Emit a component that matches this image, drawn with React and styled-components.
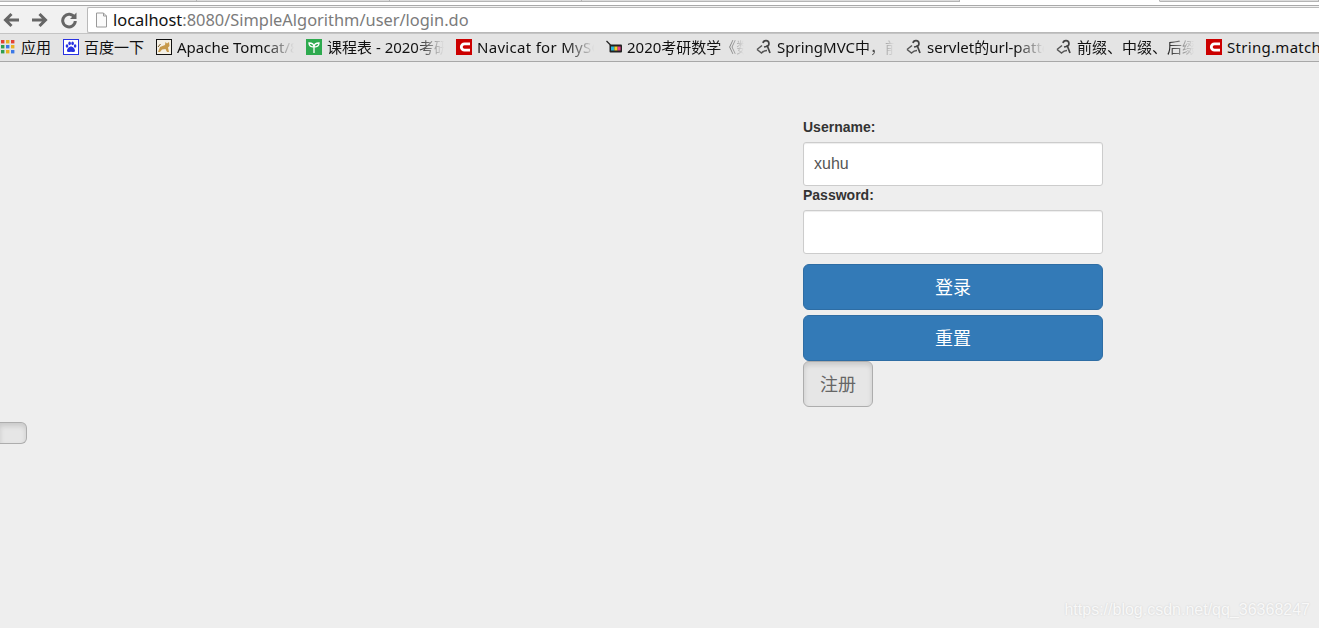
import React from 'react';
import styled, { createGlobalStyle } from 'styled-components';

const SANS = '"Noto Sans", "Noto Sans CJK SC", sans-serif';
const FORM = '"Liberation Sans", "Noto Sans CJK SC", sans-serif';

const GlobalStyle = createGlobalStyle`
  html, body {
    margin: 0;
    padding: 0;
    height: 100%;
    overflow: hidden;
    background: #eeeeee;
  }
  * {
    box-sizing: border-box;
  }
`;

const Window = styled.div`
  width: 1319px;
  height: 628px;
  display: flex;
  flex-direction: column;
  overflow: hidden;
  background: #eeeeee;
`;

const TabStrip = styled.div`
  height: 6px;
  flex: none;
  display: flex;
  background: #ffffff;
  border-bottom: 1px solid #a9a9a9;
`;

const TabEdge = styled.div`
  width: ${(p) => p.$width}px;
  height: 2px;
  flex: none;
  background: ${(p) => (p.$light ? '#ffffff' : '#dcdcdc')};
  border-bottom: 1px solid ${(p) => (p.$light ? '#ffffff' : '#b4b4b4')};
  border-right: 1px solid #b4b4b4;
`;

const Toolbar = styled.div`
  height: 27px;
  flex: none;
  display: flex;
  align-items: center;
  padding-left: 2px;
  background: #f1f1f1;
`;

const NavIcon = styled.svg`
  width: 18px;
  height: 18px;
  flex: none;
  margin-right: 11px;
  fill: none;
  stroke: #666666;
  stroke-width: 3;
`;

const AddressBar = styled.div`
  flex: 1;
  height: 26px;
  margin-left: -2px;
  display: flex;
  align-items: center;
  padding-left: 7px;
  background: #ffffff;
  border: 1px solid #b9b9b9;
  border-right: none;
  border-radius: 2px 0 0 2px;
  font: 16.4px ${SANS};
  color: #7b7b7b;
  white-space: nowrap;
`;

const PageIcon = styled.svg`
  width: 13px;
  height: 16px;
  flex: none;
  margin-right: 5px;
`;

const Host = styled.span`
  color: #111111;
`;

const BookmarkBar = styled.div`
  height: 29px;
  flex: none;
  display: flex;
  align-items: center;
  padding-bottom: 2px;
  background: #e4e4e4;
  border-top: 1px solid #c4c4c4;
  border-bottom: 1px solid #a8a8a8;
  overflow: hidden;
`;

const Bookmark = styled.div`
  width: ${(p) => p.$width}px;
  flex: none;
  display: flex;
  align-items: center;
  gap: ${(p) => p.$gap || 5}px;
  margin-left: ${(p) => p.$left || 0}px;
`;

const BookmarkLabel = styled.span`
  flex: 1;
  min-width: 0;
  overflow: hidden;
  white-space: nowrap;
  font: 15px/20px ${SANS};
  letter-spacing: ${(p) => p.$spacing || 0}px;
  color: #111111;
  ${(p) =>
    p.$fade &&
    `-webkit-mask-image: linear-gradient(to right, #000 76%, transparent 100%);
     mask-image: linear-gradient(to right, #000 76%, transparent 100%);`}
`;

const Favicon = styled.svg`
  width: 16px;
  height: 16px;
  flex: none;
`;

const AppsSvg = styled.svg`
  width: 14px;
  height: 14px;
  flex: none;
`;

const Page = styled.main`
  position: relative;
  flex: 1;
  padding-top: 58px;
  background: #eeeeee;
`;

const LoginForm = styled.form`
  width: 300px;
  margin: 0 0 0 803px;
  display: flex;
  flex-direction: column;
`;

const FieldLabel = styled.label`
  display: block;
  height: 20px;
  font: bold 14px/14px ${FORM};
  color: #333333;
  margin-bottom: 2px;
`;

const TextInput = styled.input`
  display: block;
  width: 300px;
  height: 44px;
  padding: 0 10px;
  background: #ffffff;
  border: 1px solid #cccccc;
  border-radius: 3px;
  box-shadow: inset 0 1px 1px rgba(0, 0, 0, 0.075);
  font: 16px ${FORM};
  color: #555555;
  outline: none;
  margin-bottom: 2px;
`;

const PrimaryButton = styled.button`
  display: block;
  width: 300px;
  height: 46px;
  margin-top: ${(p) => p.$top}px;
  padding: 0 0 2px;
  background: #337ab7;
  border: 1px solid #2e6da4;
  border-radius: 6px;
  font: 18px ${FORM};
  color: #ffffff;
`;

const GrayButton = styled.button`
  display: block;
  width: 70px;
  height: 46px;
  padding: 0 0 2px;
  background: #e6e6e6;
  border: 1px solid #adadad;
  border-radius: 6px;
  box-shadow: inset 0 3px 5px rgba(0, 0, 0, 0.125);
  font: 18px ${FORM};
  color: #666666;
`;

const StrayButton = styled.div`
  width: 27px;
  height: 22px;
  margin-top: 15px;
  background: #e6e6e6;
  border: 1px solid #adadad;
  border-left: none;
  border-radius: 0 6px 6px 0;
  box-shadow: inset 0 3px 5px rgba(0, 0, 0, 0.125);
`;

const Watermark = styled.div`
  position: absolute;
  right: 9px;
  bottom: 9px;
  font: 16px ${FORM};
  color: #f8f8f8;
  text-shadow: 0 0 2px rgba(0, 0, 0, 0.14);
`;

const BaiduIcon = () => (
  <Favicon viewBox="0 0 16 16">
    <rect x="0.5" y="0.5" width="15" height="15" fill="#fff" stroke="#2932e1" />
    <g fill="#2932e1">
      <ellipse cx="4" cy="7" rx="1.3" ry="1.8" />
      <ellipse cx="6.6" cy="4.4" rx="1.3" ry="1.8" />
      <ellipse cx="9.6" cy="4.4" rx="1.3" ry="1.8" />
      <ellipse cx="12.1" cy="7" rx="1.3" ry="1.8" />
      <path d="M8 7.5c-2 0-4 2.4-4 4.2 0 1.6 2 1.4 4 1.1 2 .3 4 .5 4-1.1 0-1.8-2-4.2-4-4.2z" />
    </g>
  </Favicon>
);

const TomcatIcon = () => (
  <Favicon viewBox="0 0 16 16">
    <rect x="0.5" y="0.5" width="15" height="15" fill="#f4f0e6" stroke="#111" />
    <path d="M2 13l2-5 5-2 .5-3 1.5 1.5L13 3l.5 4-1.5 1.5 1 4.5h-2l-1.5-3-3.5.5L4 13z" fill="#c79a4b" />
    <path d="M2 8l2.5-3" stroke="#7a5a26" fill="none" />
  </Favicon>
);

const SproutIcon = () => (
  <Favicon viewBox="0 0 16 16">
    <rect width="16" height="16" fill="#2eaa4f" />
    <path
      d="M8 14V8M8 8C8 5 6 4 3 4c0 3 2 4 5 4zM8 8c0-3 2-4 5-4 0 3-2 4-5 4z"
      fill="none"
      stroke="#fff"
      strokeWidth="1.3"
    />
  </Favicon>
);

const NavicatIcon = () => (
  <Favicon viewBox="0 0 16 16">
    <rect width="16" height="16" fill="#cc0000" />
    <path d="M14 4.8H8.5a3.2 3.2 0 0 0 0 6.4H14" fill="none" stroke="#fff" strokeWidth="2.8" />
  </Favicon>
);

const TvIcon = () => (
  <Favicon viewBox="0 0 16 16">
    <path d="M0.5 2l4 4" stroke="#222" strokeWidth="1.2" />
    <rect x="3.5" y="5.5" width="12.5" height="8" rx="1" fill="#222" />
    <rect x="5" y="7.5" width="3.4" height="4" fill="#28b5d8" />
    <rect x="8.4" y="7.500" width="3.2" height="4" fill="#f5d327" />
    <rect x="11.6" y="7.5" width="3" height="4" fill="#e8418c" />
  </Favicon>
);

const CsdnIcon = () => (
  <Favicon viewBox="0 0 16 16">
    <path
      d="M1 10.5L6 6.5M1 10.5l4.5 3.5c1.500-1.500 3-2.500 5.500-2.500"
      fill="none"
      stroke="#555"
      strokeWidth="1.5"
    />
    <path
      d="M7 4a3 3 0 1 1 3.5 3.5L8 8M11 6l3 8"
      fill="none"
      stroke="#444"
      strokeWidth="1.7"
    />
  </Favicon>
);

const AppsIcon = () => (
  <AppsSvg viewBox="0 0 14 14">
    {['#e34133', '#e8b020', '#e34133', '#2f9e4f', '#3b78e7', '#e8b020', '#2f9e4f', '#e8b020', '#3b78e7'].map(
      (color, i) => (
        <rect key={i} x={(i % 3) * 5} y={Math.floor(i / 3) * 5} width="3.4" height="3.4" fill={color} />
      )
    )}
  </AppsSvg>
);

const BOOKMARKS = [
  { icon: <BaiduIcon />, text: '百度一下', width: 81 },
  { icon: <TomcatIcon />, text: 'Apache Tomcat/8.5.24', fade: true },
  { icon: <SproutIcon />, text: '课程表 - 2020考研', fade: true },
  { icon: <NavicatIcon />, text: 'Navicat for MySQL', fade: true, spacing: 0.3 },
  { icon: <TvIcon />, text: '2020考研数学《数学', fade: true },
  { icon: <CsdnIcon />, text: 'SpringMVC中，前端', fade: true },
  { icon: <CsdnIcon />, text: 'servlet的url-pattern', fade: true },
  { icon: <CsdnIcon />, text: '前缀、中缀、后缀表达式', fade: true },
  { icon: <NavicatIcon />, text: 'String.matches', width: 113, spacing: 0.3 },
];

const App = () => (
  <Window>
    <GlobalStyle />
    <TabStrip>
      <TabEdge $width={197} />
      <TabEdge $width={193} />
      <TabEdge $width={192} />
      <TabEdge $width={378} />
      <TabEdge $width={200} $light />
      <TabEdge $width={159} />
    </TabStrip>
    <Toolbar>
      <NavIcon viewBox="0 0 18 18">
        <path d="M17 9H3M9.5 3L3.5 9l6 6" />
      </NavIcon>
      <NavIcon viewBox="0 0 18 18">
        <path d="M1 9h14M8.5 3l6 6-6 6" />
      </NavIcon>
      <NavIcon viewBox="0 0 18 18">
        <path d="M14.5 6.5A6.3 6.3 0 1 0 15.3 10" />
        <path d="M16.5 1.5V8H10z" fill="#666666" stroke="none" />
      </NavIcon>
      <AddressBar>
        <PageIcon viewBox="0 0 13 16">
          <path d="M1.5 1h7l3 3v11h-10z" fill="#fbfbfb" stroke="#9a9a9a" />
          <path d="M8.5 1v3h3" fill="none" stroke="#9a9a9a" />
        </PageIcon>
        <Host>localhost</Host>:8080/SimpleAlgorithm/user/login.do
      </AddressBar>
    </Toolbar>
    <BookmarkBar>
      <Bookmark $width={62} $left={1} $gap={6}>
        <AppsIcon />
        <BookmarkLabel>应用</BookmarkLabel>
      </Bookmark>
      {BOOKMARKS.map((b, i) => (
        <Bookmark key={i} $width={b.width || 138} $left={i === 0 ? 0 : 12}>
          {b.icon}
          <BookmarkLabel $fade={b.fade} $spacing={b.spacing}>{b.text}</BookmarkLabel>
        </Bookmark>
      ))}
    </BookmarkBar>
    <Page>
      <LoginForm>
        <FieldLabel>Username:</FieldLabel>
        <TextInput defaultValue="xuhu" />
        <FieldLabel>Password:</FieldLabel>
        <TextInput type="password" />
        <PrimaryButton type="button" $top={8}>登录</PrimaryButton>
        <PrimaryButton type="button" $top={5}>重置</PrimaryButton>
        <GrayButton type="button">注册</GrayButton>
      </LoginForm>
      <StrayButton />
      <Watermark>https://blog.csdn.net/qq_36368247</Watermark>
    </Page>
  </Window>
);

export default App;
